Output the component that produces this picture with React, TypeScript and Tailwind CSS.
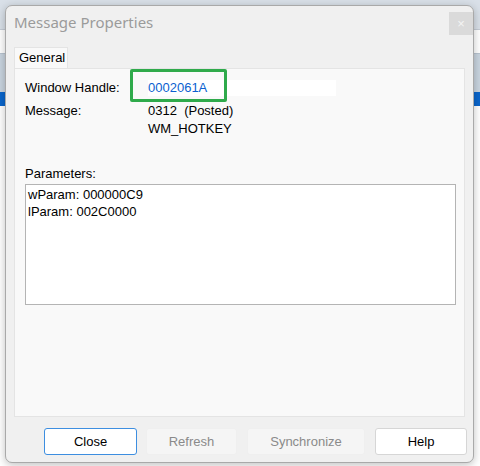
import React from "react";

const font = { fontFamily: '"Liberation Sans", Arial, sans-serif' };

export default function App() {
  return (
    <div className="relative w-[480px] h-[466px] overflow-hidden bg-white" style={font}>
      {/* background window behind the dialog */}
      <div className="flex flex-col w-full">
        <div className="h-[30px] bg-[#d9e0e8] border-b border-[#c5ccd5]" />
        <div className="h-[23px] bg-white" />
        <div className="h-[39px] bg-[#c9d4df] border-t border-[#b8c3cf]" />
        <div className="h-[14px] bg-[#0a66cc]" />
        <div className="h-[360px] bg-white" />
      </div>

      {/* dialog */}
      <div className="absolute left-[5px] top-[5px] w-[469px] h-[458px] rounded-[7px] border border-[#a9a9a9] bg-[#f0f0f0] shadow-[0_2px_8px_rgba(0,0,0,0.25)] flex flex-col">
        {/* title bar */}
        <div className="relative h-[41px] flex items-start">
          <div
            className="pl-[8px] pt-[6px] text-[15px] leading-[20px] text-[#9b9b9b]"
            style={{ fontFamily: '"Noto Sans", "Open Sans", sans-serif' }}
          >
            Message Properties
          </div>
          <div className="absolute right-0 top-[6px] w-[24px] h-[23px] bg-[#dadada] flex items-center justify-center text-[#f4f4f4] text-[13px] leading-none">
            ×
          </div>
        </div>

        {/* tab strip */}
        <div className="flex pl-[8px]">
          <div className="w-[54px] h-[21px] bg-[#f9f9f9] border border-b-0 border-[#e4e4e4] text-[13px] leading-[20px] text-black pl-[4px]">
            General
          </div>
        </div>

        {/* tab panel */}
        <div className="relative ml-[8px] w-[451px] h-[349px] bg-[#f9f9f9] border border-[#e4e4e4] pt-[11px] pl-[10px] text-[13px] text-black">
          <div className="flex h-[16px] items-center">
            <div className="w-[123px] leading-[16px]">Window Handle:</div>
            <div className="w-[188px] h-[16px] bg-white text-[#0b5fd0] leading-[16px]">0002061A</div>
          </div>
          <div className="flex mt-[6px]">
            <div className="w-[123px] leading-[18px]">Message:</div>
            <div className="flex flex-col leading-[18px]">
              <div className="whitespace-pre">0312  (Posted)</div>
              <div>WM_HOTKEY</div>
            </div>
          </div>
          <div className="mt-[27px] leading-[18px]">Parameters:</div>
          <div className="mt-[1px] w-[431px] h-[121px] bg-white border border-[#b4b4b4] pl-[2px] pt-[1px] leading-[17px]">
            <div>wParam: 000000C9</div>
            <div>lParam: 002C0000</div>
          </div>

          {/* highlight annotation */}
          <div className="absolute left-[115px] top-[0px] w-[97px] h-[33px] border-[3px] border-[#2faa4b] rounded-[2px]" />
        </div>

        {/* buttons */}
        <div className="flex pl-[38px] pt-[11px] gap-[9px] text-[13px]">
          <div className="w-[93px] h-[27px] bg-white border border-[#3d8ee0] rounded-[3px] flex items-center justify-center text-black">
            Close
          </div>
          <div className="w-[91px] h-[27px] bg-[#f5f5f5] border border-[#efefef] rounded-[3px] flex items-center justify-center text-[#8a8a8a]">
            Refresh
          </div>
          <div className="w-[118px] h-[27px] bg-[#f5f5f5] border border-[#efefef] rounded-[3px] flex items-center justify-center text-[#8a8a8a] ml-[1px]">
            Synchronize
          </div>
          <div className="w-[92px] h-[27px] bg-white border border-[#d6d6d6] rounded-[3px] flex items-center justify-center text-black ml-[1px]">
            Help
          </div>
        </div>
      </div>
    </div>
  );
}
